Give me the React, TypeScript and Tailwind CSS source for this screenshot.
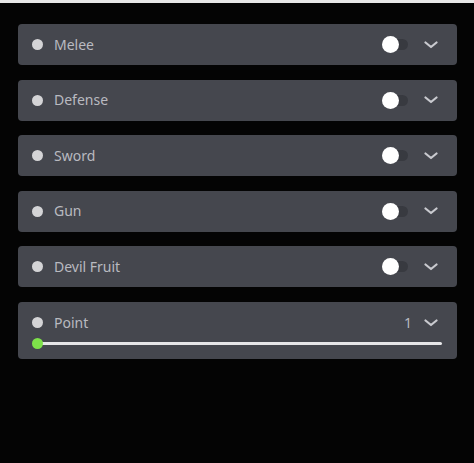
import React from "react";

const items = ["Melee", "Defense", "Sword", "Gun", "Devil Fruit"];

function Chevron() {
  return (
    <svg width="14" height="8" viewBox="0 0 14 8" fill="none" className="shrink-0">
      <path d="M1.5 1.5 L7 6 L12.5 1.5" stroke="#c9cacf" strokeWidth="2.2" strokeLinecap="round" strokeLinejoin="round" />
    </svg>
  );
}

function Toggle() {
  return (
    <div className="relative w-[26px] h-[17px] flex items-center">
      <div className="absolute left-[6px] right-0 h-[11px] rounded-full bg-[#383a40]" />
      <div className="relative w-[17px] h-[17px] rounded-full bg-white" />
    </div>
  );
}

export default function App() {
  return (
    <div
      className="w-[474px] h-[463px] bg-[#040404] border-t-[3px] border-[#e8e8e8] flex flex-col gap-[14.6px] pl-[18px] pr-[17px] pt-[21px]"
      style={{ fontFamily: '"Noto Sans", Inter, sans-serif' }}
    >
      {items.map((t) => (
        <div key={t} className="h-[41px] shrink-0 rounded-[4px] bg-[#45474e] flex items-center pl-[14px] pr-[19px]">
          <div className="w-[11px] h-[11px] rounded-full bg-[#d4d4d6]" />
          <span className="ml-[11px] text-[14px] text-[#b9bac0] leading-none flex-1">{t}</span>
          <Toggle />
          <div className="ml-[16px]">
            <Chevron />
          </div>
        </div>
      ))}
      <div className="h-[57px] shrink-0 rounded-[4px] bg-[#45474e] flex flex-col pl-[14px] pr-[19px] pt-[15px]">
        <div className="flex items-center h-[12px]">
          <div className="w-[11px] h-[11px] rounded-full bg-[#d4d4d6]" />
          <span className="ml-[11px] text-[14px] text-[#b9bac0] leading-none flex-1">Point</span>
          <span className="text-[14px] text-[#b9bac0] leading-none">1</span>
          <div className="ml-[12px]">
            <Chevron />
          </div>
        </div>
        <div className="relative mt-[9px] h-[12px] flex items-center mr-[-4px]">
          <div className="w-full h-[3px] bg-[#e6e6e8] rounded-full ml-[2px]" />
          <div className="absolute left-0 w-[11px] h-[11px] rounded-full bg-[#7ee24a]" />
        </div>
      </div>
    </div>
  );
}
